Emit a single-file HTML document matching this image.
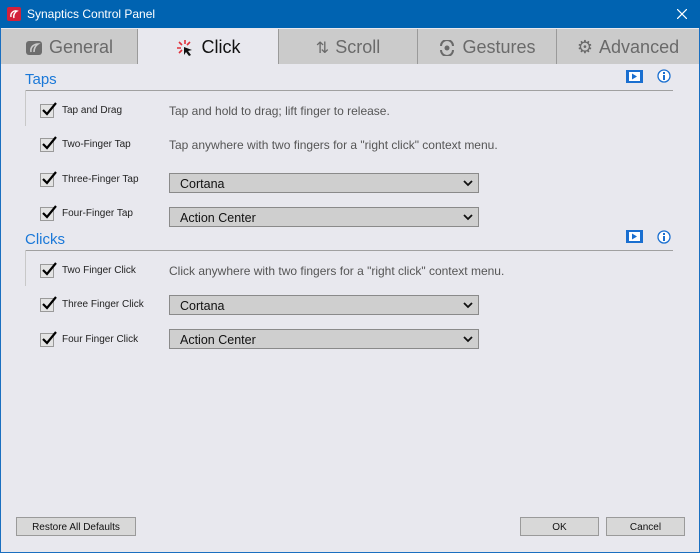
<!DOCTYPE html>
<html><head><style>
*{margin:0;padding:0;box-sizing:border-box}
body{width:700px;height:553px;overflow:hidden;background:#e8e8ee;font-family:"Liberation Sans",sans-serif;position:relative}
.win{position:absolute;left:0;top:0;width:700px;height:553px;border:1px solid #1a6fc0;background:#e8e8ee}
.title{position:absolute;left:0;top:0;width:700px;height:28px;background:#0063b1;color:#fff;font-size:12px}
.tab{position:absolute;top:29px;height:35px;background:#cbcbcb;border-right:1px solid #9a9a9a;color:#6a6a6a;font-size:18px;display:flex;align-items:center;justify-content:center;gap:6px;padding-top:2px}
.tab.act{background:#e8e8ee;color:#111;border-right:1px solid #9a9a9a}
.h{position:absolute;left:25px;color:#1a78d8;font-size:15px}
.line{position:absolute;left:25px;width:648px;height:1px;background:#a0a0a0}
.vl{position:absolute;left:25px;width:1px;background:#c8c8c8}
.cb{position:absolute;left:40px;width:14px;height:14px;border:1px solid #9a9a9a;background:#e4e4e4}
.cb svg{position:absolute;left:-1px;top:-4px}
.lbl{position:absolute;left:62px;font-size:10px;color:#222}
.desc{position:absolute;left:169px;font-size:12px;color:#555}
.sel{position:absolute;left:169px;width:310px;height:20px;background:#cfcfcf;border:1px solid #8a8a8a;font-size:12.5px;color:#111;padding:3px 0 0 10px}
.sel svg{position:absolute;right:5px;top:6px}
.btn{position:absolute;top:517px;height:19px;background:#d8d8d8;border:1px solid #9a9a9a;font-size:10px;color:#111;text-align:center;line-height:19px}
</style></head><body>
<div class="win"></div>
<div class="title">
<svg style="position:absolute;left:7px;top:7px" width="14" height="14"><rect width="14" height="14" rx="2" fill="#d2203a"/><path d="M4 10C3 6 7 3 10 4C8 5 6 8 7 11" stroke="#fff" stroke-width="1.4" fill="none"/></svg>
<span style="position:absolute;left:27px;top:7px">Synaptics Control Panel</span>
<svg style="position:absolute;left:677px;top:9px" width="10" height="10"><path d="M0 0L10 10M10 0L0 10" stroke="#fff" stroke-width="1.2"/></svg>
</div>
<div class="tab" style="left:1px;width:137px"><svg width="18" height="16"><rect x="1" y="1" width="16" height="14" rx="3" fill="#6d6d6d"/><path d="M6 12C5 7 9 4 13 4C10 6 9 9 9 12" stroke="#cbcbcb" stroke-width="1.6" fill="none"/></svg>General</div>
<div class="tab act" style="left:138px;width:141px"><svg width="20" height="18"><path d="M3 3L6 6M9 1V5M1 9H5M3 14L6 11M14 3L11 6" stroke="#e0303a" stroke-width="1.6"/><path d="M8 8L16 11L12 12L15 16L13 17L10 13L8 16Z" fill="#111"/></svg>Click</div>
<div class="tab" style="left:279px;width:139px"><span style="font-size:16px">⇅</span>Scroll</div>
<div class="tab" style="left:418px;width:139px"><svg width="18" height="16"><path d="M3 6A6 6 0 0 1 15 6M15 10A6 6 0 0 1 3 10" stroke="#6a6a6a" stroke-width="2" fill="none"/><circle cx="9" cy="8" r="2.5" fill="#6a6a6a"/></svg>Gestures</div>
<div class="tab" style="left:557px;width:142px;border-right:none"><span style="font-size:18px;color:#6a6a6a">⚙</span>Advanced</div>

<div class="h" style="top:71px">Taps</div>
<div class="line" style="top:90px"></div>
<div class="vl" style="top:90px;height:36px"></div>
<div class="h" style="top:231px">Clicks</div>
<div class="line" style="top:250px"></div>
<div class="vl" style="top:250px;height:36px"></div>
<svg style="position:absolute;left:626px;top:70px" width="17" height="13"><rect width="17" height="13" fill="#1a6fd0"/><rect x="3" y="2" width="11" height="9" fill="#fff"/><path d="M6 3.5L11 6.5L6 9.5Z" fill="#1a6fd0"/></svg>
<svg style="position:absolute;left:657px;top:69px" width="14" height="14"><circle cx="7" cy="7" r="6" fill="#fff" stroke="#1a6fd0" stroke-width="1.3"/><rect x="6" y="6" width="2" height="5" fill="#1a6fd0"/><rect x="6" y="3" width="2" height="2" fill="#1a6fd0"/></svg>
<svg style="position:absolute;left:626px;top:230px" width="17" height="13"><rect width="17" height="13" fill="#1a6fd0"/><rect x="3" y="2" width="11" height="9" fill="#fff"/><path d="M6 3.5L11 6.5L6 9.5Z" fill="#1a6fd0"/></svg>
<svg style="position:absolute;left:657px;top:230px" width="14" height="14"><circle cx="7" cy="7" r="6" fill="#fff" stroke="#1a6fd0" stroke-width="1.3"/><rect x="6" y="6" width="2" height="5" fill="#1a6fd0"/><rect x="6" y="3" width="2" height="2" fill="#1a6fd0"/></svg>

<div class="cb" style="top:104px"><svg width="18" height="18"><path d="M3 9L7 13L16 2" stroke="#000" stroke-width="2.2" fill="none"/></svg></div>
<div class="lbl" style="top:105px">Tap and Drag</div>
<div class="desc" style="top:104px">Tap and hold to drag; lift finger to release.</div>
<div class="cb" style="top:138px"><svg width="18" height="18"><path d="M3 9L7 13L16 2" stroke="#000" stroke-width="2.2" fill="none"/></svg></div>
<div class="lbl" style="top:139px">Two-Finger Tap</div>
<div class="desc" style="top:138px">Tap anywhere with two fingers for a "right click" context menu.</div>
<div class="cb" style="top:173px"><svg width="18" height="18"><path d="M3 9L7 13L16 2" stroke="#000" stroke-width="2.2" fill="none"/></svg></div>
<div class="lbl" style="top:174px">Three-Finger Tap</div>
<div class="sel" style="top:173px">Cortana<svg width="10" height="7"><path d="M1 1L5 5L9 1" stroke="#111" stroke-width="1.8" fill="none"/></svg></div>
<div class="cb" style="top:207px"><svg width="18" height="18"><path d="M3 9L7 13L16 2" stroke="#000" stroke-width="2.2" fill="none"/></svg></div>
<div class="lbl" style="top:208px">Four-Finger Tap</div>
<div class="sel" style="top:207px">Action Center<svg width="10" height="7"><path d="M1 1L5 5L9 1" stroke="#111" stroke-width="1.8" fill="none"/></svg></div>

<div class="cb" style="top:264px"><svg width="18" height="18"><path d="M3 9L7 13L16 2" stroke="#000" stroke-width="2.2" fill="none"/></svg></div>
<div class="lbl" style="top:265px">Two Finger Click</div>
<div class="desc" style="top:264px">Click anywhere with two fingers for a "right click" context menu.</div>
<div class="cb" style="top:298px"><svg width="18" height="18"><path d="M3 9L7 13L16 2" stroke="#000" stroke-width="2.2" fill="none"/></svg></div>
<div class="lbl" style="top:299px">Three Finger Click</div>
<div class="sel" style="top:295px">Cortana<svg width="10" height="7"><path d="M1 1L5 5L9 1" stroke="#111" stroke-width="1.8" fill="none"/></svg></div>
<div class="cb" style="top:333px"><svg width="18" height="18"><path d="M3 9L7 13L16 2" stroke="#000" stroke-width="2.2" fill="none"/></svg></div>
<div class="lbl" style="top:334px">Four Finger Click</div>
<div class="sel" style="top:329px">Action Center<svg width="10" height="7"><path d="M1 1L5 5L9 1" stroke="#111" stroke-width="1.8" fill="none"/></svg></div>

<div class="btn" style="left:16px;width:120px">Restore All Defaults</div>
<div class="btn" style="left:520px;width:79px">OK</div>
<div class="btn" style="left:606px;width:79px">Cancel</div>
</body></html>
